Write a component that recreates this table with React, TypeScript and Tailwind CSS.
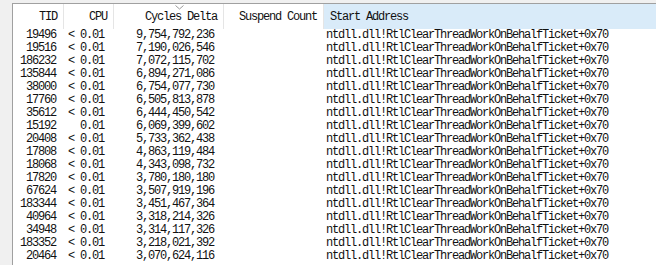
const rows: [string, string, string][] = [
  ['19496', '< 0.01', '9,754,792,236'],
  ['19516', '< 0.01', '7,190,026,546'],
  ['186232', '< 0.01', '7,072,115,702'],
  ['135844', '< 0.01', '6,894,271,086'],
  ['38000', '< 0.01', '6,754,077,730'],
  ['17760', '< 0.01', '6,505,813,878'],
  ['35612', '< 0.01', '6,444,450,542'],
  ['15192', '0.01', '6,069,399,602'],
  ['20408', '< 0.01', '5,733,362,438'],
  ['17808', '< 0.01', '4,863,119,484'],
  ['18068', '< 0.01', '4,343,098,732'],
  ['17820', '< 0.01', '3,780,180,180'],
  ['67624', '< 0.01', '3,507,919,196'],
  ['183344', '< 0.01', '3,451,467,364'],
  ['40964', '< 0.01', '3,318,214,326'],
  ['34948', '< 0.01', '3,314,117,326'],
  ['183352', '< 0.01', '3,218,021,392'],
  ['20464', '< 0.01', '3,070,624,116'],
]

const ADDRESS = 'ntdll.dll!RtlClearThreadWorkOnBehalfTicket+0x70'

export default function App() {
  return (
    <div className="w-[656px] h-[265px] overflow-hidden bg-[#f0f0f0] pl-[12px] pt-[3px] font-['Liberation_Mono',monospace] text-[12px] tracking-[-1.2px] text-[#111]">
      <div className="h-full bg-white border-l border-t border-[#a0a0a0]">
        {/* header */}
        <div className="grid grid-cols-[51px_50px_110px_100px_1fr] h-[25px] items-stretch">
          <div className="flex items-center justify-end pr-[6px] border-r border-[#e5e5e5]">TID</div>
          <div className="flex items-center justify-end pr-[6px] border-r border-[#e5e5e5]">CPU</div>
          <div className="relative flex items-center justify-end pr-[6px] border-r border-[#e5e5e5]">
            <svg className="absolute left-[61px] top-[1px]" width="9" height="5" viewBox="0 0 9 5">
              <path d="M0.5 0.5 L4.5 4 L8.5 0.5" fill="none" stroke="#9a9a9a" strokeWidth="1" />
            </svg>
            Cycles Delta
          </div>
          <div className="flex items-center justify-end pr-[6px] border-r border-[#e5e5e5]">Suspend Count</div>
          <div className="flex items-center pl-[6px] bg-[#d9ebf9]">Start Address</div>
        </div>
        {/* rows */}
        {rows.map(([tid, cpu, cycles]) => (
          <div key={tid} className="grid grid-cols-[51px_50px_110px_100px_1fr] h-[13px] leading-[13px] whitespace-nowrap">
            <div className="text-right pr-[8px]">{tid}</div>
            <div className="text-right pr-[10px]">{cpu}</div>
            <div className="text-right pr-[10px]">{cycles}</div>
            <div />
            <div className="pl-[2px]">{ADDRESS}</div>
          </div>
        ))}
      </div>
    </div>
  )
}
